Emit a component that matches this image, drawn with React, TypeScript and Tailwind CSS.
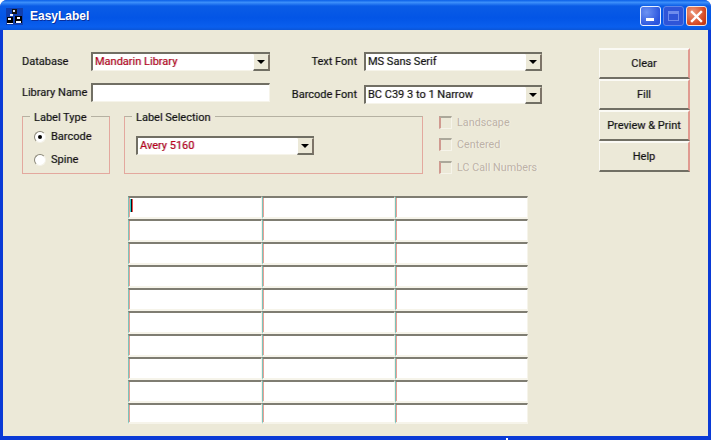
import type { ReactNode } from "react";

const fringe = "[text-shadow:-1px_0_0_rgba(0,210,210,0.3),1px_0_0_rgba(255,0,0,0.25)]";
const rows = Array.from({ length: 30 }, (_, i) => i);

function Label({ children, className = "" }: { children: ReactNode; className?: string }) {
  return <span className={`text-[11px] leading-[13px] text-[#111] ${fringe} ${className}`}>{children}</span>;
}

function Combo({ value, width, red }: { value: string; width: string; red?: boolean }) {
  return (
    <div className={`flex h-[19px] ${width} border-t-2 border-l-2 border-[#716f64] border-b border-b-[#f6f4ea] bg-white`}>
      <span className={`flex-1 pl-[2px] text-[11px] leading-[16px] ${red ? "text-[#c00018]" : "text-[#111]"} ${fringe}`}>
        {value}
      </span>
      <div className="flex h-[17px] w-[17px] items-center justify-center border-t border-l border-t-[#ece9d8] border-l-[#ffffff] border-r-2 border-b-2 border-r-[#7d7468] border-b-[#716f64] bg-[#ece9d8]">
        <div className="h-0 w-0 border-x-[4px] border-t-[4px] border-x-transparent border-t-black" />
      </div>
    </div>
  );
}

function Group({ title, width, children }: { title: string; width: string; children: ReactNode }) {
  return (
    <fieldset className={`h-[70px] ${width} border border-[#e3a89e] border-t-[#b5b1a2]`}>
      <legend className="ml-[7px] px-[4px]">
        <Label>{title}</Label>
      </legend>
      {children}
    </fieldset>
  );
}

function Radio({ label, checked }: { label: string; checked?: boolean }) {
  return (
    <div className="flex h-[23px] items-center gap-[5px]">
      <div className="flex h-[12px] w-[12px] items-center justify-center rounded-full border border-t-[#8a8778] border-l-[#8a8778] border-r-[#f4f2e8] border-b-[#f4f2e8] bg-white">
        {checked && <div className="h-[4px] w-[4px] rounded-full bg-black" />}
      </div>
      <Label>{label}</Label>
    </div>
  );
}

function Check({ label }: { label: string }) {
  return (
    <div className="flex h-[22.5px] items-center gap-[5px]">
      <div className="h-[13px] w-[13px] border-t-2 border-l-2 border-t-[#aba89a] border-l-[#d09a90] border-r border-b border-r-[#f6f4ea] border-b-[#f6f4ea]" />
      <span className="text-[10.8px] leading-[13px] text-[#bdb2a6] [text-shadow:1px_0_0_rgba(255,255,255,0.5)]">{label}</span>
    </div>
  );
}

function SideButton({ label }: { label: string }) {
  return (
    <div className={`flex h-[31px] w-[91px] items-center justify-center border-t-2 border-l border-t-[#fbfaf5] border-l-[#fbfaf5] border-b-2 border-r-2 border-b-[#716f64] border-r-[#e09a90] bg-[#ece9d8] pt-[1px] text-[11px] text-[#111] ${fringe}`}>
      {label}
    </div>
  );
}

function TitleIcon() {
  return (
    <svg width="17" height="17" viewBox="0 0 17 17" className="shrink-0">
      <rect width="17" height="17" fill="#0f3fb0" />
      <path d="M6 1h5v5H6z" fill="#111" />
      <path d="M7 2h2v2H7z" fill="#dfe8ff" />
      <path d="M1 9h6v6H1z" fill="#000" />
      <path d="M9 8h7v7H9z" fill="#000" />
      <path d="M2 10h3v2H2zM11 9h3v2h-3zM4 6h3v2H4zM10 13h5v2h-5zM1 15h6v1H1z" fill="#f4f6ff" />
    </svg>
  );
}

function WindowButton({ kind }: { kind: "min" | "max" | "close" }) {
  if (kind === "close") {
    return (
      <div className="flex h-[20px] w-[21px] items-center justify-center rounded-[3px] border border-[#f4e4dc] bg-[radial-gradient(circle_at_30%_30%,#ee9a7c,#d3441f_70%,#b8330f)]">
        <svg width="13" height="13" viewBox="0 0 13 13">
          <path d="M2 2l9 9M11 2l-9 9" stroke="#fff" strokeWidth="2.4" strokeLinecap="square" />
        </svg>
      </div>
    );
  }
  if (kind === "max") {
    return (
      <div className="flex h-[20px] w-[21px] items-center justify-center rounded-[3px] border border-[#5f86e8] bg-[#2f55d8]">
        <div className="h-[10px] w-[11px] border border-t-[3px] border-[#6f8cec]" />
      </div>
    );
  }
  return (
    <div className="flex h-[20px] w-[21px] items-end rounded-[3px] border border-[#e8f0ff] bg-[radial-gradient(circle_at_30%_30%,#6d93f2,#2a55de_75%)] pb-[4px] pl-[5px]">
      <div className="h-[3px] w-[8px] bg-white" />
    </div>
  );
}

export default function App() {
  return (
    <div className="relative flex h-[440px] w-[711px] flex-col overflow-hidden rounded-t-[7px] bg-[#0a3ad6] font-['Roboto','Liberation_Sans',Arial,sans-serif]">
      {/* title bar */}
      <div className="flex h-[30px] shrink-0 items-center bg-[linear-gradient(180deg,#0a5fe8_0%,#3c8ffa_8%,#0a5ce6_20%,#0355e6_60%,#0a5fee_90%,#0a55d8_100%)] pl-[6px] pr-[4px] pt-[2px]">
        <TitleIcon />
        <span className="ml-[7px] font-['Liberation_Sans',Arial,sans-serif] text-[12px] font-bold text-white [text-shadow:1px_1px_0_#0a2f9c]">EasyLabel</span>
        <div className="ml-auto flex gap-[2px]">
          <WindowButton kind="min" />
          <WindowButton kind="max" />
          <WindowButton kind="close" />
        </div>
      </div>

      {/* client area */}
      <div className="mx-[3px] mb-[4px] flex-1 bg-[#ece9d8] pl-[19px] pt-[18px]">
        <div className="flex">
          <div className="w-[520px] pt-[4px]">
            <div className="flex items-center">
              <Label className="w-[69px]">Database</Label>
              <Combo value="Mandarin Library" width="w-[179px]" red />
              <Label className="w-[87px] text-right">Text Font</Label>
              <div className="ml-[7px]">
                <Combo value="MS Sans Serif" width="w-[178px]" />
              </div>
            </div>
            <div className="mt-[12px] flex items-start">
              <Label className="mt-[3px] w-[69px]">Library Name</Label>
              <div className="h-[19px] w-[179px] border-t-2 border-l-2 border-[#716f64] border-b border-r border-b-[#f6f4ea] border-r-[#f6f4ea] bg-white" />
              <Label className="mt-[5px] w-[87px] text-right">Barcode Font</Label>
              <div className="ml-[7px] mt-[2px]">
                <Combo value="BC C39 3 to 1 Narrow" width="w-[178px]" />
              </div>
            </div>
            <div className="flex items-start">
              <Group title="Label Type" width="w-[88px]">
                <div className="-mt-[3px] pl-[11px]">
                  <Radio label="Barcode" checked />
                  <Radio label="Spine" />
                </div>
              </Group>
              <div className="ml-[14px]">
                <Group title="Label Selection" width="w-[299px]">
                  <div className="pl-[11px] pt-[8px]">
                    <Combo value="Avery 5160" width="w-[178px]" red />
                  </div>
                </Group>
              </div>
              <div className="ml-[16px] pt-[7px]">
                <Check label="Landscape" />
                <Check label="Centered" />
                <Check label="LC Call Numbers" />
              </div>
            </div>
          </div>
          <div className="ml-[57px] flex flex-col">
            <SideButton label="Clear" />
            <SideButton label="Fill" />
            <SideButton label="Preview & Print" />
            <SideButton label="Help" />
          </div>
        </div>

        {/* label grid */}
        <div className="ml-[106px] mt-[17px] grid w-[400px] grid-cols-[134px_133px_133px] grid-rows-[repeat(9,23px)_21px]">
          {rows.map((i) => (
            <div
              key={i}
              className="border-t-2 border-t-[#7f7d72] border-l border-l-[#7cc4bc] border-b-2 border-b-[#f6f4ea] border-r border-r-[#f6f4ea] bg-white pl-[1px] pt-[1px] shadow-[inset_1px_0_0_#e8a096]"
            >
              {i === 0 && <div className="ml-[1px] h-[13px] w-[1px] bg-[#111] shadow-[-1px_0_0_#30d0d0,1px_0_0_#f05050]" />}
            </div>
          ))}
        </div>
      </div>

      {/* pointer tip poking in at the bottom edge */}
      <div className="absolute left-[506px] top-[438px] h-[2px] w-[2px] bg-white" />
    </div>
  );
}
